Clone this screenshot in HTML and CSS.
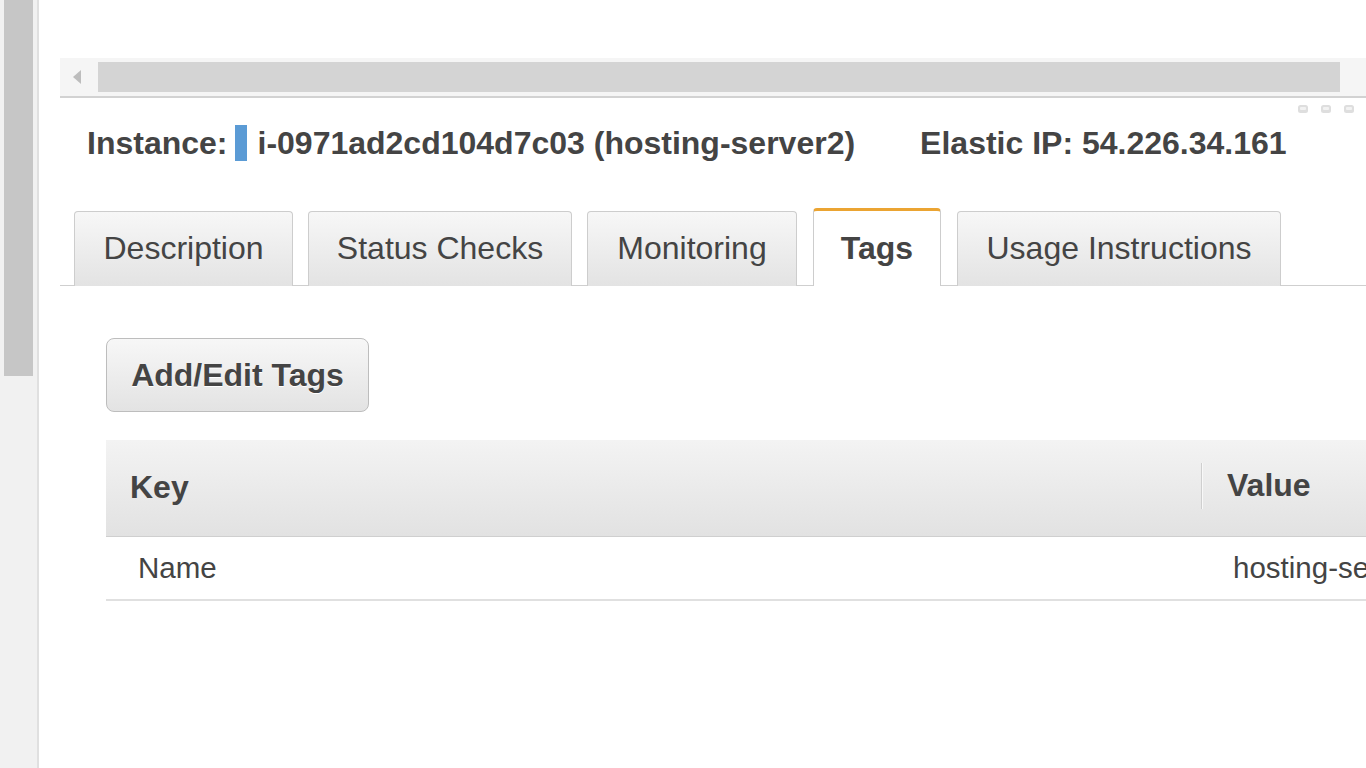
FILE: index.html
```html
<!DOCTYPE html>
<html>
<head>
<meta charset="utf-8">
<link rel="stylesheet" href="styles.css">
</head>
<body>
<div class="page">
  <div class="sidebar"><div class="vthumb"></div></div>
  <div class="main">
    <div class="hscroll">
      <div class="harrow"><svg width="12" height="16" viewBox="0 0 12 16"><path d="M10 1 L2 8 L10 15 Z" fill="#bdbdbd"/></svg></div>
      <div class="hthumb"></div>
    </div>
    <div class="icons">
      <svg class="ico" width="12" height="10" viewBox="0 0 12 10"><rect x="1" y="1" width="10" height="8" rx="2.5" fill="#dedede"/><rect x="3" y="3" width="6" height="3" rx="1" fill="#f2f2f2"/></svg>
      <svg class="ico" width="12" height="10" viewBox="0 0 12 10"><rect x="1" y="1" width="10" height="8" rx="2.5" fill="#dedede"/><rect x="3" y="3" width="6" height="3" rx="1" fill="#f2f2f2"/></svg>
      <svg class="ico" width="12" height="10" viewBox="0 0 12 10"><rect x="1" y="1" width="10" height="8" rx="2.5" fill="#dedede"/><rect x="3" y="3" width="6" height="3" rx="1" fill="#f2f2f2"/></svg>
    </div>
    <div class="header">
      <span class="hl">Instance:</span>
      <span class="marker"></span>
      <span class="hl">i-0971ad2cd104d7c03 (hosting-server2)</span>
      <span class="hl eip">Elastic IP: 54.226.34.161</span>
    </div>
    <div class="tabs">
      <div class="tab w1">Description</div>
      <div class="tab w2">Status Checks</div>
      <div class="tab w3">Monitoring</div>
      <div class="tab active w4">Tags</div>
      <div class="tab w5">Usage Instructions</div>
    </div>
    <div class="content">
      <button class="btn">Add/Edit Tags</button>
      <div class="tablewrap">
        <table class="tags">
          <thead>
            <tr><th class="ck">Key</th><th class="cv"><span class="sep"></span>Value</th></tr>
          </thead>
          <tbody>
            <tr><td class="ck">Name</td><td class="cv">hosting-server2</td></tr>
          </tbody>
        </table>
      </div>
    </div>
  </div>
</div>
</body>
</html>
```

FILE: styles.css
```css
* { box-sizing: border-box; }
html, body { margin: 0; padding: 0; background: #fff; }
body {
  font-family: "Liberation Sans", Arial, sans-serif;
  color: #444;
  overflow: hidden;
  width: 1366px;
  height: 768px;
}
.page { display: flex; height: 768px; }
.sidebar {
  width: 39px;
  flex: none;
  background: #f1f1f1;
  border-right: 2px solid #e0e0e0;
  padding-left: 4px;
}
.vthumb {
  width: 29px;
  height: 376px;
  background: #c6c6c6;
}
.main {
  flex: 1;
  min-width: 0;
  padding-left: 21px;
  padding-top: 58px;
  overflow: hidden;
}
.hscroll {
  height: 40px;
  background: #f5f5f5;
  border-bottom: 2px solid #d2d2d2;
  display: flex;
  align-items: flex-start;
  padding-top: 4px;
}
.harrow {
  width: 38px;
  height: 30px;
  display: flex;
  align-items: center;
  justify-content: center;
  padding-right: 4px;
}
.hthumb {
  width: 1242px;
  height: 30px;
  background: #d4d4d4;
}
.icons {
  display: flex;
  justify-content: flex-end;
  gap: 11px;
  height: 20px;
  padding-top: 6px;
  padding-right: 11px;
}
.ico { display: block; }
.header {
  display: flex;
  align-items: center;
  height: 50px;
  padding-left: 27px;
}
.hl {
  font-weight: bold;
  font-size: 32px;
  line-height: 40px;
  color: #444;
}
.marker {
  width: 12px;
  height: 36px;
  background: #5b9bd5;
  margin: 0 10px 0 8px;
}
.eip { margin-left: 65px; }
.tabs {
  display: flex;
  align-items: flex-end;
  margin-top: 41px;
  padding-left: 14px;
  border-bottom: 1px solid #cfcfcf;
  height: 77px;
}
.tab {
  height: 75px;
  margin-bottom: -1px;
  margin-right: 15px;
  border: 1px solid #cdcdcd;
  border-bottom: none;
  border-radius: 4px 4px 0 0;
  background: linear-gradient(#f7f7f7, #e3e3e3);
  font-size: 32px;
  line-height: 73px;
  text-align: center;
  color: #444;
  flex: none;
}
.tab.active {
  height: 78px;
  background: #fff;
  border-top: 3px solid #eba432;
  font-weight: bold;
  line-height: 74px;
  margin-right: 16px;
}
.w1 { width: 219px; }
.w2 { width: 264px; }
.w3 { width: 210px; margin-right: 16px; }
.w4 { width: 128px; }
.w5 { width: 324px; }
.content {
  padding-left: 46px;
  padding-top: 52px;
}
.btn {
  display: block;
  width: 263px;
  height: 74px;
  border: 1px solid #bdbdbd;
  border-radius: 8px;
  background: linear-gradient(#f7f7f7, #e3e3e3);
  font-family: "Liberation Sans", Arial, sans-serif;
  font-weight: bold;
  font-size: 32px;
  color: #444;
  text-shadow: 0 1px 0 #fff;
  padding: 0;
  margin: 0;
}
.tablewrap {
  margin-top: 28px;
  width: 1600px;
}
.tags {
  border-collapse: collapse;
  table-layout: fixed;
  width: 1500px;
}
.tags th {
  height: 96px;
  background: linear-gradient(#f3f3f3, #e2e2e2);
  border-bottom: 1px solid #cfcfcf;
  font-size: 32px;
  font-weight: bold;
  text-align: left;
  color: #444;
  padding: 0;
}
.tags th.ck { width: 1095px; padding-left: 24px; }
.tags th.cv { padding-left: 0; }
.sep {
  display: inline-block;
  vertical-align: middle;
  width: 2px;
  height: 46px;
  border-left: 1px solid #cfcfcf;
  border-right: 1px solid #f8f8f8;
  margin-right: 24px;
  margin-top: -4px;
}
.tags td {
  height: 64px;
  border-bottom: 2px solid #e0e0e0;
  font-size: 29.5px;
  color: #444;
  padding: 0;
  white-space: nowrap;
}
.tags td.ck { padding-left: 32px; }
.tags td.cv { padding-left: 32px; }
```
